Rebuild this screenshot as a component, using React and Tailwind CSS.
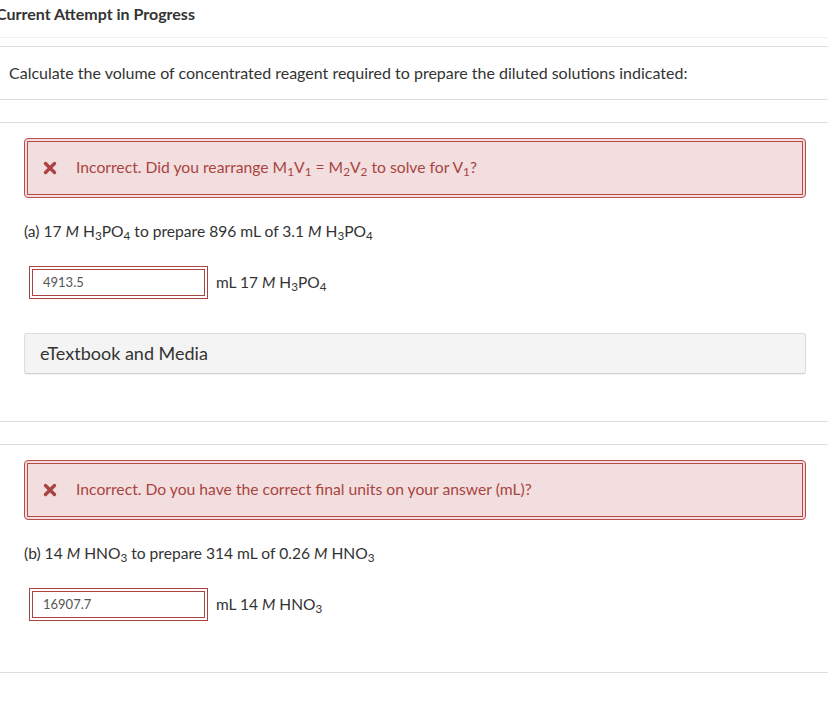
import React from 'react'

function XIcon() {
  return (
    <svg viewBox="0 0 14 14" className="h-[14px] w-[14px]" aria-hidden="true">
      <path d="M2.5 2.5 L11.5 11.5 M11.5 2.5 L2.5 11.5" stroke="#a94442" strokeWidth="3.4" strokeLinecap="round" fill="none" />
    </svg>
  )
}

function Feedback({ children }) {
  return (
    <div className="rounded-[4px] border border-[#b94a48] bg-[#f2dede] p-[2px]">
      <div className="flex h-[54px] items-center border border-[#b94a48] pl-[15px] text-[15.7px] text-[#a94442]">
        <XIcon />
        <span className="ml-[19px]">{children}</span>
      </div>
    </div>
  )
}

function Answer({ value, children }) {
  return (
    <div className="flex items-center">
      <div className="border border-[#a94442] p-[2px]">
        <div className="flex h-[27px] w-[173px] items-center border border-[#a94442] bg-white pl-[10px] text-[13px] text-[#555]">
          {value}
        </div>
      </div>
      <span className="ml-[8px] text-[15.5px] text-[#333]">{children}</span>
    </div>
  )
}

export default function App() {
  return (
    <div className="min-h-[702px] w-[828px] overflow-hidden bg-white font-['Lato','Noto_Sans',sans-serif] text-[#333]">
      <div className="flex h-[37px] items-center">
        <h1 className="-ml-[4px] -mt-[10px] text-[16px] font-bold text-[#333]">Current Attempt in Progress</h1>
      </div>
      <div className="h-[9px] border-t border-[#eee]" />
      <div className="flex h-[53px] items-center border-t border-[#ddd] pl-[9px] text-[16px]">
        Calculate the volume of concentrated reagent required to prepare the diluted solutions indicated:
      </div>
      <div className="h-[23px] border-t border-[#ddd]" />

      <div className="h-[299px] border-t border-[#ddd] pl-[24px] pr-[22px] pt-[15px]">
        <Feedback>
          Incorrect. Did you rearrange M<sub>1</sub>V<sub>1</sub> = M<sub>2</sub>V<sub>2</sub> to solve for V<sub>1</sub>?
        </Feedback>
        <p className="mt-[21px] h-[24px] text-[15.6px] leading-[24px]">
          (a) 17 <i>M</i> H<sub>3</sub>PO<sub>4</sub> to prepare 896 mL of 3.1 <i>M</i> H<sub>3</sub>PO<sub>4</sub>
        </p>
        <div className="mt-[23px] pl-[5px]">
          <Answer value="4913.5">
            mL 17 <i>M</i> H<sub>3</sub>PO<sub>4</sub>
          </Answer>
        </div>
        <div className="mt-[34px] flex h-[41px] items-center rounded-[3px] border border-[#ddd] border-b-[#d0d0d0] bg-[#f4f4f4] pl-[15px] text-[18px] text-[#333] shadow-[0_1px_1px_rgba(0,0,0,0.05)]">
          eTextbook and Media
        </div>
      </div>
      <div className="h-[23px] border-t border-[#ddd]" />

      <div className="h-[228px] border-t border-[#ddd] pl-[24px] pr-[22px] pt-[15px]">
        <Feedback>Incorrect. Do you have the correct final units on your answer (mL)?</Feedback>
        <p className="mt-[21px] h-[24px] text-[15.6px] leading-[24px]">
          (b) 14 <i>M</i> HNO<sub>3</sub> to prepare 314 mL of 0.26 <i>M</i> HNO<sub>3</sub>
        </p>
        <div className="mt-[23px] pl-[5px]">
          <Answer value="16907.7">
            mL 14 <i>M</i> HNO<sub>3</sub>
          </Answer>
        </div>
      </div>
      <div className="border-t border-[#ddd]" />
    </div>
  )
}
